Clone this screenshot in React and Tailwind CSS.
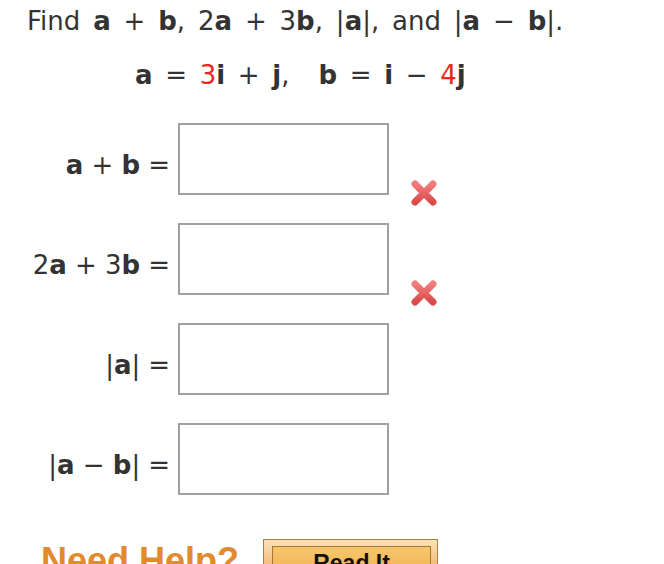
const font = { fontFamily: '"DejaVu Sans", Verdana, sans-serif' };
const arial = { fontFamily: '"Liberation Sans", Arial, sans-serif' };

function RedX() {
  return (
    <svg width="28" height="28" viewBox="0 0 28 28" className="block">
      <defs>
        <linearGradient id="xg" x1="0" y1="0" x2="0" y2="1">
          <stop offset="0" stopColor="#f27c7c" />
          <stop offset="1" stopColor="#d94a4a" />
        </linearGradient>
      </defs>
      <path d="M5 5 L23 23 M23 5 L5 23" stroke="url(#xg)" strokeWidth="7" strokeLinecap="round" fill="none" />
    </svg>
  );
}

function Row({ label, wrong }) {
  return (
    <div className="flex items-start h-[100px]">
      <div className="w-[170px] h-[72px] flex items-center justify-end pt-[12px] text-[26px] text-[#333] whitespace-pre">
        {label}
        <span className="ml-[8px]">=</span>
      </div>
      <div className="ml-[8px] w-[211px] h-[72px] border-2 border-[#a0a0a0] bg-white" />
      {wrong && (
        <div className="ml-[21px] mt-[56px]">
          <RedX />
        </div>
      )}
    </div>
  );
}

export default function App() {
  return (
    <div className="w-[664px] h-[564px] overflow-hidden bg-white text-[#333]" style={font}>
      <div className="pl-[27px] pt-[4px] h-[40px] text-[26px] leading-[34px] whitespace-pre [word-spacing:4.6px]">
        Find <b>a</b> + <b>b</b>, 2<b>a</b> + 3<b>b</b>, |<b>a</b>|, and |<b>a</b> − <b>b</b>|.
      </div>
      <div className="pl-[135px] mt-[18px] h-[65px] text-[26px] leading-[34px] whitespace-pre [word-spacing:4.4px]">
        <b>a</b> = <span className="text-[#e8281e]">3</span><b>i</b> + <b>j</b>,<span className="inline-block w-[29px]" /><b>b</b> = <b>i</b> − <span className="text-[#e8281e]">4</span><b>j</b>
      </div>
      <Row label={<><b>a</b> + <b>b</b></>} wrong />
      <Row label={<>2<b>a</b> + 3<b>b</b></>} wrong />
      <Row label={<>|<b>a</b>|</>} />
      <Row label={<>|<b>a</b> − <b>b</b>|</>} />
      <div className="flex items-start mt-[16px]">
        <div className="ml-[41px] mt-[4px] text-[36px] font-bold leading-none text-[#e28a30] whitespace-pre" style={arial}>
          Need Help?
        </div>
        <div className="ml-[24px] w-[175px] h-[44px] border border-[#b07d45] bg-gradient-to-b from-[#fbe2b8] to-[#eba14c] pl-[8px] pr-[6px] pt-[6px]">
          <div className="h-full border border-[#a57539] bg-gradient-to-b from-[#f6c66c] to-[#efb04c] flex justify-center pt-[5px]">
            <span className="text-[23px] leading-none font-bold text-[#111]" style={arial}>
              Read It
            </span>
          </div>
        </div>
      </div>
    </div>
  );
}
